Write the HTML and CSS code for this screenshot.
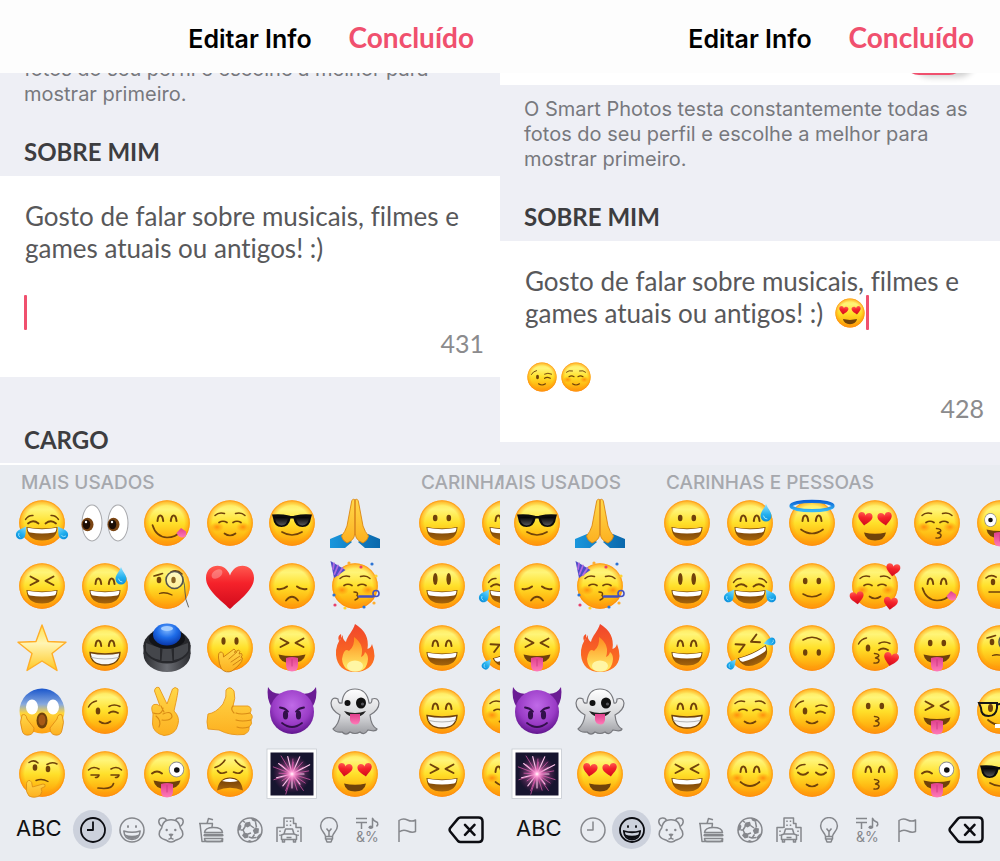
FILE: index.html
```html
<!DOCTYPE html>
<html lang="pt-BR">
<head>
  <meta charset="UTF-8">
  <meta name="viewport" content="width=device-width, initial-scale=1">
  <title>Editar Info</title>
  <link rel="stylesheet" href="styles.css">
</head>
<body>

  <svg class="sprite" aria-hidden="true">
    <defs>
      <linearGradient id="g-face" x1="0" y1="0" x2="0" y2="1">
        <stop offset="0" stop-color="#ffe250"/>
        <stop offset=".2" stop-color="#fff578"/>
        <stop offset=".5" stop-color="#ffe02a"/>
        <stop offset=".75" stop-color="#ffbc14"/>
        <stop offset="1" stop-color="#ff930a"/>
      </linearGradient>
      <radialGradient id="g-edge">
        <stop offset=".76" stop-color="#ff9500" stop-opacity="0"/>
        <stop offset=".92" stop-color="#ff9a10" stop-opacity=".5"/>
        <stop offset="1" stop-color="#ff8408" stop-opacity=".95"/>
      </radialGradient>
      <radialGradient id="g-blush">
        <stop offset="0" stop-color="#ff6a00" stop-opacity=".65"/>
        <stop offset="1" stop-color="#ff7a00" stop-opacity="0"/>
      </radialGradient>
      <linearGradient id="g-mouth" x1="0" y1="0" x2="0" y2="1">
        <stop offset="0" stop-color="#6b3a06"/>
        <stop offset="1" stop-color="#a5640c"/>
      </linearGradient>
      <linearGradient id="g-drop" x1="0" y1="0" x2="0" y2="1">
        <stop offset="0" stop-color="#8fe0ff"/>
        <stop offset=".6" stop-color="#23b0ee"/>
        <stop offset="1" stop-color="#0b8fdc"/>
      </linearGradient>
      <linearGradient id="g-tongue" x1="0" y1="0" x2="0" y2="1">
        <stop offset="0" stop-color="#e0408c"/>
        <stop offset="1" stop-color="#ff7ab8"/>
      </linearGradient>
      <linearGradient id="g-heart" x1="0" y1="0" x2="0" y2="1">
        <stop offset="0" stop-color="#ff5a50"/>
        <stop offset=".4" stop-color="#f5222a"/>
        <stop offset="1" stop-color="#d00a1c"/>
      </linearGradient>
      <linearGradient id="g-hand" x1="0" y1="0" x2="0" y2="1">
        <stop offset="0" stop-color="#ffd84a"/>
        <stop offset="1" stop-color="#fdb020"/>
      </linearGradient>
      <linearGradient id="g-sleeve" x1="0" y1="0" x2="1" y2="0">
        <stop offset="0" stop-color="#1a96dc"/>
        <stop offset="1" stop-color="#0a68ac"/>
      </linearGradient>
      <linearGradient id="g-star" x1="0" y1="0" x2="0" y2="1">
        <stop offset="0" stop-color="#ffe14a"/>
        <stop offset=".4" stop-color="#fff5b4"/>
        <stop offset="1" stop-color="#ffc822"/>
      </linearGradient>
      <linearGradient id="g-scream" x1="0" y1="0" x2="0" y2="1">
        <stop offset="0" stop-color="#1a56cc"/>
        <stop offset=".35" stop-color="#87a9de"/>
        <stop offset=".55" stop-color="#ffd53a"/>
        <stop offset="1" stop-color="#ffa010"/>
      </linearGradient>
      <linearGradient id="g-base" x1="0" y1="0" x2="1" y2="0">
        <stop offset="0" stop-color="#2c2d31"/>
        <stop offset=".5" stop-color="#6b6d73"/>
        <stop offset="1" stop-color="#2c2d31"/>
      </linearGradient>
      <radialGradient id="g-ball" cx=".5" cy=".3" r=".7">
        <stop offset="0" stop-color="#7ab4ff"/>
        <stop offset=".5" stop-color="#1e6ce8"/>
        <stop offset="1" stop-color="#0836a8"/>
      </radialGradient>
      <radialGradient id="g-devil" cx=".5" cy=".35" r=".65">
        <stop offset="0" stop-color="#c06ae8"/>
        <stop offset=".65" stop-color="#9a3cc6"/>
        <stop offset="1" stop-color="#61158e"/>
      </radialGradient>
      <linearGradient id="g-fire" x1="0" y1="0" x2="0" y2="1">
        <stop offset="0" stop-color="#f0452c"/>
        <stop offset="1" stop-color="#ff7a1e"/>
      </linearGradient>
      <linearGradient id="g-flame" x1="0" y1="0" x2="0" y2="1">
        <stop offset="0" stop-color="#ff8a1e"/>
        <stop offset="1" stop-color="#fff26a"/>
      </linearGradient>
      <linearGradient id="g-ghost" x1="0" y1="0" x2="0" y2="1">
        <stop offset="0" stop-color="#ffffff"/>
        <stop offset=".6" stop-color="#d5d6d9"/>
        <stop offset="1" stop-color="#9c9da2"/>
      </linearGradient>
      <radialGradient id="g-burst">
        <stop offset="0" stop-color="#ffffff"/>
        <stop offset=".25" stop-color="#ffa6da"/>
        <stop offset="1" stop-color="#c22a8c" stop-opacity="0"/>
      </radialGradient>
      <linearGradient id="g-halo" x1="0" y1="0" x2="0" y2="1">
        <stop offset="0" stop-color="#0d63d6"/>
        <stop offset="1" stop-color="#35b8f5"/>
      </linearGradient>
      <linearGradient id="g-shades" x1="0" y1="0" x2="0" y2="1">
        <stop offset="0" stop-color="#000"/>
        <stop offset="1" stop-color="#55565a"/>
      </linearGradient>
    </defs>

    <symbol id="icon-recent" viewBox="0 0 26 26">
      <circle cx="13" cy="13" r="12"/>
      <path d="M13 4.500V13H7"/>
    </symbol>
    <symbol id="icon-smileys" viewBox="0 0 26 26">
      <circle cx="13" cy="13" r="12"/>
      <ellipse class="solid" cx="9" cy="9.500" rx="1" ry="1.600"/>
      <ellipse class="solid" cx="17" cy="9.500" rx="1" ry="1.600"/>
      <path d="M4.800 14Q13 16.500 21.200 14Q20.500 22.500 13 22.500T4.800 14Z"/>
      <path class="solid" d="M6 17.500Q13 20 20 17.500Q18 22 13 22T6 17.500Z"/>
    </symbol>
    <symbol id="icon-animals" viewBox="0 0 26 26">
      <path d="M3.800 9.500C-.5 6.500 0 1.400 4 1C6.500 .6 8 2 8.500 3.500M22.200 9.500C26.500 6.500 26 1.400 22 1C19.500 .6 18 2 17.500 3.500"/>
      <path d="M8.500 3.500Q13 2 17.500 3.500Q21.500 5.500 22.300 11Q25 14 24.800 17.500C24.600 22.500 17.500 22.500 16.500 24Q13 26 9.500 24C8.500 22.500 1.400 22.500 1.200 17.500Q1 14 3.700 11Q4.500 5.500 8.500 3.500Z"/>
      <circle class="solid" cx="8.700" cy="13" r="1.200"/>
      <circle class="solid" cx="17.300" cy="13" r="1.200"/>
      <path class="solid" d="M10.500 17Q13 16 15.500 17Q15 19.300 13 19.300T10.500 17Z"/>
      <path d="M13 19V20.800M10.500 21.800Q12 22.300 13 20.800Q14 22.300 15.500 21.800"/>
    </symbol>
    <symbol id="icon-food" viewBox="0 0 26 26">
      <path d="M1 6.500H15M2 6.500L4 24.500H24.500V21.500M14.500 6.500L14 10M9 6.500L10.500 1.500L15 2.800"/>
      <path d="M6.500 15.500Q7 10.500 15.500 10.500T24.500 15.500Z"/>
      <rect class="solid" x="5.500" y="16.800" width="20" height="2.800" rx="1.400"/>
      <path d="M6.500 21.500H24.500Q24.500 24.500 22 24.500H9Q6.500 24.500 6.500 21.500Z"/>
    </symbol>
    <symbol id="icon-activity" viewBox="0 0 26 26">
      <circle cx="13" cy="13" r="12"/>
      <path class="solid" d="M8.500 5.500L13 4.800L14 8.500L10.500 10.500L7.200 8.500ZM18 10.500L22 11.500L21.500 16L17.500 17.200L15.800 13.500ZM7 15.500L11.200 16.500L11.500 20.500L7.800 21.500L5 18.500ZM14 .8Q18 1 20.500 3.500L18.500 5L15 3.500ZM.8 14Q.8 10 2.800 6.800L4.500 9L3.500 13ZM25 16Q23.500 20.500 20.500 22.500L19.500 20.500L22 17.500ZM9.500 24.500L12.500 23L16.500 24.800Q13 25.800 9.500 24.500Z"/>
      <path d="M13.500 8.500L17 11M14 16L11 17M8.500 9L6 13L7.500 16M12 20L15 21L17.500 17.500M18.500 5L19.500 10.500M8 5.500L6 4M3.500 13H6M19.500 20.500L15 21"/>
    </symbol>
    <symbol id="icon-travel" viewBox="0 0 26 26">
      <path d="M1 25V10.500H7.500M8 11V1H17.500V6.500H20V10.500H25V25"/>
      <path d="M11 3.500V5M14.500 3.500V5M11 7.500V9M14.500 7.500V9M4 13.500V15M4 17.500V19M22 13.500V15M22 17.500V19"/>
      <path d="M5.500 22.500V18L8 17L9.500 12H16.500L18 17L20.500 18V22.500ZM8 17H18M6.500 22.500V25H8.500V22.500M17.500 22.500V25H19.500V22.500M10.500 20.500H15.500"/>
    </symbol>
    <symbol id="icon-objects" viewBox="0 0 26 26">
      <path d="M9.500 19.500C9 15.500 4.600 14 4.600 9A8.400 8.400 0 0 1 21.400 9C21.400 14 17 15.500 16.500 19.500ZM9.500 19.500V22H16.500V19.500M10 22.500L11 25H15L16 22.500M10.500 11.500L13 14.500L15.500 11.500M13 14.500V19"/>
    </symbol>
    <symbol id="icon-symbols" viewBox="0 0 26 26">
      <path d="M1 1.500H12M1 5.500H12M6.500 5.500V12M17.500 10V1.200Q18.500 4 22.500 5.500Q23.500 7.500 21.500 9.500"/>
      <ellipse class="solid" cx="15.800" cy="10.200" rx="2.300" ry="1.700"/>
      <text x="1" y="25" class="glyphs">&amp;%</text>
    </symbol>
    <symbol id="icon-flags" viewBox="0 0 26 26">
      <path d="M5 25V3.500Q9 .8 13.500 3T21.500 3V14.500Q18 16 13.500 14T5 15"/>
    </symbol>
    <symbol id="icon-delete" viewBox="0 0 36 28">
      <path d="M12.500 1.500H30.500Q34.500 1.500 34.500 5.500V22Q34.500 26 30.500 26H12.500Q11 26 10 25L2.200 15.500Q1 13.800 2.200 12L10 2.600Q11 1.500 12.500 1.500ZM17 8.800L26.500 18.800M26.500 8.800L17 18.800"/>
    </symbol>
  </svg>

  <main class="screens">

    <section class="screen">
      <header class="topbar">
        <h1>Editar Info</h1>
        <button class="done" type="button">Concluído</button>
      </header>
      <div class="content">
        <p class="note">O Smart Photos testa constantemente todas as fotos do seu perfil e escolhe a melhor para mostrar primeiro.</p>
        <h2 class="label"><label for="bio-before">SOBRE MIM</label></h2>
        <div class="bio">
          <textarea id="bio-before" rows="4" spellcheck="false">Gosto de falar sobre musicais, filmes e
games atuais ou antigos! :)</textarea>
          <span class="caret caret-start"></span>
          <p class="counter">431</p>
        </div>
        <h2 class="label label-next"><label for="job">CARGO</label></h2>
        <input id="job" class="job" type="text">
      </div>
      <div class="keyboard">
        <div class="strip">
          <section class="group recent">
            <h3>MAIS USADOS</h3>
            <div class="emojis" data-list="recent"></div>
          </section>
          <section class="group">
            <h3>CARINHAS E PESSOAS</h3>
            <div class="emojis" data-list="people"></div>
          </section>
        </div>
        <nav class="tabs" data-active="recent"></nav>
      </div>
    </section>

    <section class="screen">
      <header class="topbar">
        <h1>Editar Info</h1>
        <button class="done" type="button">Concluído</button>
      </header>
      <div class="content content-end">
        <div class="photos">
          <button class="add-photo" type="button" aria-label="Adicionar foto"></button>
        </div>
        <p class="note">O Smart Photos testa constantemente todas as fotos do seu perfil e escolhe a melhor para mostrar primeiro.</p>
        <h2 class="label"><label for="bio-after">SOBRE MIM</label></h2>
        <div class="bio">
          <textarea id="bio-after" rows="4" spellcheck="false">Gosto de falar sobre musicais, filmes e
games atuais ou antigos! :)</textarea>
          <span class="typed typed-inline" data-emoji="heartEyes"></span>
          <span class="caret caret-inline"></span>
          <span class="typed typed-last"><span data-emoji="wink"></span><span data-emoji="relaxed"></span></span>
          <p class="counter">428</p>
        </div>
      </div>
      <div class="keyboard">
        <div class="strip strip-scrolled">
          <section class="group recent recent-tail">
            <h3>MAIS USADOS</h3>
            <div class="emojis" data-list="recent" data-skip="20"></div>
          </section>
          <section class="group">
            <h3>CARINHAS E PESSOAS</h3>
            <div class="emojis" data-list="people"></div>
          </section>
        </div>
        <nav class="tabs" data-active="smileys"></nav>
      </div>
    </section>

  </main>

  <script src="script.js"></script>
</body>
</html>
```
FILE: styles.css
```css
* {
  box-sizing: border-box;
}
body {
  margin: 0;
  font-family: Inter, "Liberation Sans", sans-serif;
  background: #eeeff5;
}
h1, h2, h3, p {
  margin: 0;
}
button {
  padding: 0;
  border: none;
  background: none;
  font-family: inherit;
  cursor: pointer;
}
.sprite {
  position: absolute;
  width: 0;
  height: 0;
}
.screens {
  display: flex;
  min-height: 100vh;
}
.screen {
  display: flex;
  flex: 1;
  flex-direction: column;
  min-width: 0;
  height: 100vh;
  overflow: hidden;
}

/* top bar */
.topbar {
  display: grid;
  grid-template-columns: 1fr auto 1fr;
  align-items: center;
  height: 73px;
  flex-shrink: 0;
  padding: 5px 26px 0;
  background: #fdfdfd;
}
.topbar h1 {
  grid-column: 2;
  font-size: 25px;
  font-weight: 600;
  color: #000;
}
.done {
  justify-self: end;
  padding-bottom: 4px;
  font-family: Lato, sans-serif;
  font-size: 28px;
  font-weight: 700;
  color: #f0506e;
}

/* scrolled form, resting at its lower end */
.content {
  display: flex;
  flex: 1;
  flex-direction: column;
  justify-content: flex-end;
  min-height: 0;
  overflow: hidden;
  background: #eeeff5;
}
.content > * {
  flex-shrink: 0;
}
.content-end {
  padding-bottom: 23px;
}
.photos {
  display: flex;
  justify-content: flex-end;
  padding: 0 36px 10px;
  background: #fff;
}
.add-photo {
  width: 60px;
  height: 30px;
  border-radius: 15px;
  background: #f0506e;
  box-shadow: 10px 2px 6px rgba(0, 0, 0, 0.2);
}
.note {
  padding: 12px 24px 0;
  font-size: 20px;
  line-height: 25px;
  color: #77787d;
}
.label {
  padding: 33px 24px 12px;
  font-family: Lato, sans-serif;
  font-size: 24px;
  line-height: 24px;
  font-weight: 700;
  color: #3d3d40;
}
.label-next {
  padding: 51px 24px 11px;
}
.bio {
  position: relative;
  padding: 24px 16px 19px 25px;
  background: #fff;
}
.bio textarea {
  display: block;
  width: 100%;
  height: 128px;
  padding: 0;
  border: none;
  outline: none;
  resize: none;
  overflow: hidden;
  background: none;
  font-family: Lato, sans-serif;
  font-size: 26px;
  line-height: 32px;
  font-variant-ligatures: none;
  color: #58585a;
  caret-color: #f0506e;
}
.counter {
  font-family: Lato, sans-serif;
  font-size: 25px;
  line-height: 30px;
  text-align: right;
  color: #8b8b8d;
}
.caret {
  position: absolute;
  width: 3px;
  height: 35px;
  border-radius: 1px;
  background: #f0506e;
}
.caret-start {
  left: 24px;
  top: 119px;
}
.caret-inline {
  left: 366px;
  top: 54px;
}
.typed {
  position: absolute;
  display: flex;
  gap: 2px;
}
.typed svg {
  display: block;
  width: 32px;
  height: 32px;
}
.typed-inline {
  left: 334px;
  top: 56px;
}
.typed-last {
  left: 26px;
  top: 120px;
}
.job {
  height: 2px;
  padding: 0;
  border: none;
  background: #fff;
}

/* emoji keyboard */
.keyboard {
  flex-shrink: 0;
  padding: 6px 0 7px;
  overflow: hidden;
  background: #e9ecf1;
}
.strip {
  display: flex;
  gap: 25px;
  padding-left: 11px;
}
.strip-scrolled {
  padding-left: 6px;
}
.group {
  width: 375px;
  flex-shrink: 0;
}
.recent-tail {
  width: 125px;
}
.group h3 {
  display: flex;
  padding: 0 10px;
  font-size: 19px;
  line-height: 24px;
  font-weight: 500;
  color: #a6a8ad;
  white-space: nowrap;
}
.recent-tail h3 {
  justify-content: flex-end;
}
.emojis {
  display: grid;
  grid-auto-flow: column;
  grid-template-rows: repeat(5, 1fr);
  grid-auto-columns: 1fr;
  height: 313px;
  margin-top: -3px;
}
.emojis button {
  display: grid;
  place-items: center;
  min-width: 0;
}
.emojis svg {
  width: 50px;
  height: 50px;
  overflow: visible;
}
.tabs {
  display: flex;
  align-items: center;
  height: 49px;
  padding: 0 16px;
}
.abc {
  width: 57px;
  padding-bottom: 3px;
  font-size: 22px;
  text-align: left;
  color: #111;
}
.tab-list {
  display: flex;
  flex: 1;
}
.tab {
  display: flex;
  flex: 1;
  justify-content: center;
  color: #85878c;
}
.tab span {
  display: grid;
  place-items: center;
  width: 39px;
  height: 39px;
  border-radius: 50%;
}
.tab.active {
  color: #0c0d12;
}
.tab.active span {
  background: #ccd1dc;
}
.tabs svg {
  fill: none;
  stroke: currentColor;
  stroke-width: 1.5;
  stroke-linejoin: round;
}
.tab svg {
  width: 26px;
  height: 26px;
}
.tab.active svg {
  stroke-width: 1.8;
}
.solid {
  fill: currentColor;
  stroke: none;
}
.glyphs {
  fill: currentColor;
  stroke: none;
  font-family: Inter, sans-serif;
  font-size: 14px;
}
.delete {
  display: flex;
  justify-content: flex-end;
  width: 57px;
  color: #0c0d12;
}
.delete svg {
  width: 36px;
  height: 28px;
  stroke-width: 2.5;
  stroke-linecap: round;
}
```
FILE: script.js
```javascript
const BROWN = "#70420a";

const line = (d, w = 1.6, color = BROWN) =>
  `<path d="${d}" fill="none" stroke="${color}" stroke-width="${w}" stroke-linecap="round" stroke-linejoin="round"/>`;
const shape = (d, fill, extra = "") => `<path d="${d}" fill="${fill}" ${extra}/>`;
const oval = (x, y, rx, ry, fill = BROWN) =>
  `<ellipse cx="${x}" cy="${y}" rx="${rx}" ry="${ry}" fill="${fill}"/>`;
const at = (x, y, s, body, turn = 0) =>
  `<g transform="translate(${x} ${y}) rotate(${turn}) scale(${s})">${body}</g>`;

// shared pieces, all drawn on a 50 x 50 box
const face = oval(25, 25, 22.8, 22.8, "url(#g-face)") + oval(25, 25, 22.8, 22.8, "url(#g-edge)");
const blush = oval(12, 29, 7, 5, "url(#g-blush)") + oval(38, 29, 7, 5, "url(#g-blush)");
const heart = shape("M0 9C-4 5-10 1-10-4C-10-10-2-11 0-5C2-11 10-10 10-4C10 1 4 5 0 9Z", "url(#g-heart)");
const drop = shape("M0-9C2-4 5.500-1 5.500 3A5.500 5.500 0 0 1-5.500 3C-5.500-1-2-4 0-9Z", "url(#g-drop)") +
  line("M-2.500 3Q-2 6 1 6", 1, "#9be4ff");

const dotEyes = oval(18.2, 20, 2.3, 3.2) + oval(31.8, 20, 2.3, 3.2);
const tallEyes = oval(18.3, 18, 2.3, 6) + oval(31.7, 18, 2.3, 6);
const archEyes = line("M15.500 23Q16 17.500 18.300 17.500T21.200 23M28.800 23Q29.500 17.500 31.700 17.500T34.500 23", 2);
const squeezed = line("M13.500 15.500L21.500 19.800L13.500 24M36.500 15.500L28.500 19.800L36.500 24", 1.9);
const closedEyes = line("M14 24.500Q18 22 22 24.500M28 24.500Q32 22 36 24.500", 1.7);
const brows = line("M10 17.500Q13.500 14 19.500 15.500M30.500 15.500Q36.500 14 40 17.500", 1.5);
const winkEyes = oval(18, 25, 2.3, 3.6) + line("M29 27Q33 24 38 27", 1.8) + line("M8.500 21Q11 16 16.500 15M29 20.500Q34 17.500 40 20.500", 1.5);
const heartEyes = at(15, 21, .72, heart, 8) + at(35, 21, .72, heart, -8);
const laugh = shape("M9.500 29Q25 32 40.500 29Q40 42.500 25 42.500T9.500 29Z", "url(#g-mouth)") +
  shape("M10.500 29.800Q25 32.500 39.500 29.800Q39.500 34 37 34.500Q25 36.500 13 34.500Q10.500 34 10.500 29.800Z", "#fff");
const teeth = shape("M10 29.500Q25 32.500 40 29.500Q39 42 25 42T10 29.500Z", "#f6f6f6", `stroke="${BROWN}" stroke-width="1.4"`) +
  line("M11.500 34.500Q25 37.500 38.500 34.500", .8, "#a3a3a3");
const smallSmile = line("M19.500 35.500Q25 39.500 30.500 35.500", 1.7);
const kiss = line("M24.500 30.500Q30 31 28.500 33.500L25.500 35Q30.500 36 28.500 39Q27.500 40.500 24 40", 1.5);
const tongueMouth = shape("M11.500 31.500Q25 34.500 38.500 31.500Q37 39.500 25 40T11.500 31.500Z", BROWN) +
  shape("M19 35Q25 33 31 35V42Q31 48.500 25 48.500T19 42Z", "url(#g-tongue)") + line("M25 36.500V43", .8, "#c73580");
const handHeld = shape("M9.500 37Q9 31 13 31.500Q15 32 15.500 38L26 35Q29 35 28 37.500L24 39.500Q26 42 23.500 46Q18 50 12 47Q8.500 43 9.500 37Z", "url(#g-hand)", 'stroke="#d98a14" stroke-width=".8"');
const joyParts = line("M8.500 21.500Q11.500 17 16 17.500M34 17.500Q38.500 17 41.500 21.500", 1.4) +
  line("M11 25.500Q16 21 21.500 25.500M28.500 25.500Q34 21 39 25.500", 1.8) + laugh;
const shades = shape("M5 16.500Q14 15.500 22 17.500Q25 18.500 28 17.500Q36 15.500 45 16.500L44 20Q43 29 35.500 29Q28 29 26.500 20.500H23.500Q22 29 14.500 29Q7 29 6 20Z", "#0b0b0c") +
  shape("M8 19.500Q14 18 21 20Q20 27.500 14.500 27.500Q8.500 27 8 19.500ZM42 19.500Q36 18 29 20Q30 27.500 35.500 27.500Q41.500 27 42 19.500Z", "url(#g-shades)");

// rays of uneven length, in two pinks
const burst = Array.from({ length: 26 }, (_, i) => {
  const a = i * Math.PI / 13 + (i % 4) * .06;
  const r = 12 + (i * 7) % 10;
  return line(`M25 25L${(25 + Math.cos(a) * r).toFixed(1)} ${(25 + Math.sin(a) * r).toFixed(1)}`, i % 3 ? .7 : 1.1, i % 3 ? "#e85fb6" : "#ffc4ec");
}).join("");

const emoji = {
  grinning: face + dotEyes + laugh,
  smiley: face + tallEyes + laugh,
  smile: face + archEyes + laugh,
  beaming: face + archEyes + teeth,
  laughing: face + squeezed + laugh,
  sweat: face + archEyes + laugh + at(41, 15, 1, drop),
  joy: face + joyParts + at(5, 34.5, .85, drop, 35) + at(45, 34.5, .85, drop, -35),
  rofl: face + `<g transform="rotate(-25 25 25)">${squeezed + laugh}</g>` + at(7, 41, .7, drop, 40) + at(44.5, 19, .7, drop, -105),
  relaxed: face + blush + brows + closedEyes + smallSmile,
  blushing: face + blush + archEyes + line("M15.500 33Q25 41 34.500 33", 1.7),
  halo: face + archEyes + line("M14 31.500Q25 39.500 36 31.500", 1.7) +
    '<ellipse cx="25" cy="8" rx="21" ry="4.7" fill="none" stroke="url(#g-halo)" stroke-width="3.2"/>',
  slight: face + dotEyes + line("M16 33Q25 38.500 34 33", 1.5),
  upside: face + oval(18.2, 29.5, 2.2, 3.3) + oval(31.8, 29.5, 2.2, 3.3) + line("M16 17Q25 11.500 34 17", 1.5),
  wink: face + winkEyes + smallSmile,
  relieved: face + line("M9.500 19.500Q12 15.500 18 15.500M32 15.500Q38 15.500 40.500 19.500", 1.5) +
    line("M11 23.500Q16 28 21 23.500M29 23.500Q34 28 39 23.500", 1.9) + smallSmile,
  heartEyes: face + heartEyes + shape("M14 34.500Q25 37 36 34.500Q34.500 42.500 25 42.500T14 34.500Z", BROWN),
  smilingHearts: face + blush + brows + closedEyes + smallSmile + at(43, 9, .7, heart, 8) + at(7, 37, .7, heart, -8) + at(40.5, 42.5, .7, heart, 8),
  kissHeart: face + winkEyes + kiss + at(41, 36.5, .75, heart, 12),
  kissing: face + dotEyes + kiss,
  kissSmiling: face + archEyes + kiss,
  kissClosed: face + blush + brows + closedEyes + kiss,
  yum: face + archEyes + line("M10.500 27Q14 39 25 39.500Q34 39.500 38 33.500", 1.7) +
    shape("M34.500 35L39 30L44 33.500Q45 39 41 39.500Q37 40 34.500 35Z", "url(#g-tongue)"),
  tongue: face + dotEyes + tongueMouth,
  tongueSquint: face + squeezed + tongueMouth,
  winkTongue: face + line("M10 24.500Q15 20.500 20 24.500", 2) + tongueMouth + oval(34.5, 20.5, 7.7, 7.9, "#8d8d8f") +
    oval(34.5, 20.5, 6.8, 7, "#fff") + oval(34.8, 21, 2.8, 2.8, "#111"),
  zany: face + oval(15.5, 22, 6.2, 7, "#8d8d8f") + oval(15.5, 22, 5.5, 6.2, "#fff") + oval(15.5, 22, 2.3, 2.3, "#111") + oval(35, 17, 7, 7, "#fff") + oval(35, 17, 2, 2, "#111") + tongueMouth,
  raised: face + line("M11 17Q15 13 21 16M29 12Q35 8 40 13", 1.7) + oval(18, 21, 2.2, 3.2) + oval(32, 20, 2.2, 3.2) + line("M14 31H34", 1.5),
  monocle: face + line("M12 15Q16 14 20.500 12.500M29 11Q35 8 40 13", 1.6) + oval(17, 19, 2.3, 3.2) + line("M17.500 32.500Q23 30.500 30 34", 1.3) +
    '<circle cx="32.5" cy="19" r="8.5" fill="#fff" fill-opacity=".55" stroke="#55554f" stroke-width="1.6"/>' + oval(31.5, 19, 2.2, 3.2, "#8a6420") + line("M41 18Q43 24 43 31T46.500 46", .9, "#55554f"),
  nerd: face + oval(15.5, 22, 2.5, 4) + oval(34.5, 22, 2.5, 4) +
    '<path d="M4 17H22V22Q21 30 13.500 30T6 22ZM28 17H46L44 22Q43 30 36.500 30T28 22ZM22 19Q25 17 28 19" fill="none" stroke="#151515" stroke-width="2"/>' +
    line("M13 34Q25 44 37 34", 1.7) + shape("M20 38H30V42H20Z", "#fff"),
  sunglasses: face + shades + line("M15 34Q25 40 35 34", 1.7),
  disappointed: face + line("M10.500 28Q16 29 20 25.500M30 25.500Q34 29 39.500 28", 2) + line("M19 39.500Q25 32 31 39.500", 1.8),
  scream: oval(25, 25, 22.5, 22.5, "url(#g-scream)") + oval(15, 21, 6, 7.5, "#fff") + oval(36, 21, 6, 7.5, "#fff") +
    oval(25, 34.5, 5.5, 8, BROWN) + oval(25, 34, 3.5, 5.5, "#a75a16") +
    shape("M5 29Q9 27 10 33L17 42Q17 48 12 49Q6 50 5 44Q2 36 5 29ZM45 29Q41 27 40 33L33 42Q33 48 38 49Q44 50 45 44Q48 36 45 29Z", "url(#g-hand)", 'stroke="#dc8610" stroke-width=".8"'),
  thinking: face + line("M12 13.500Q17 10 21 14M30 15.500Q35 12.500 40 15", 1.5) + oval(18, 18.5, 2.3, 3.2) + oval(31, 20, 2.3, 3.2) + line("M19 31.500Q25 29 31 32.500", 1.4) + handHeld,
  smirk: face + line("M8.500 21Q13 16.500 19 20M31 20Q37 16.500 41.500 21", 1.6) + line("M11 26H19Q18.500 28.500 15.500 28.500M31 26H39Q38.500 28.500 35.500 28.500", 1.6) + line("M18 39Q32 41 33.500 34.500", 1.7),
  weary: face + line("M10 18.500Q16 17 20 11M40 18.500Q34 17 30 11", 1.5) + line("M12.500 21.500Q15 26 21.500 23M37.500 21.500Q35 26 28.500 23", 1.6) +
    shape("M12 41.500Q14 28.500 25 28.500T38 41.500Q25 36 12 41.500Z", "url(#g-mouth)") + shape("M17 32Q20 29.500 25 29.500T33 32Q25 34 17 32Z", "#fff"),
  handOver: face + oval(18.5, 18, 2.1, 3.8) + oval(31.5, 18, 2.1, 3.8) +
    shape("M13.500 35Q13 28.500 16.500 29Q19 30 18.500 34L29 26Q31.500 27 29.500 29.500L33.500 27Q36 28 34 31L36.500 30.500Q38 32 36 34.500L37.500 35Q38 38 33 43L27 48Q21 50.500 16.500 46Q14 41 13.500 35Z", "url(#g-hand)", 'stroke="#c8790e" stroke-width=".9"') +
    line("M24 36L32 29M26 39L35 33M28 42L36 36.500", .9, "#c8790e"),
  party: face + blush + brows + closedEyes + line("M24 31Q29 31 27 34.500Q30 37 25 39", 1.5) +
    shape("M.5 0L15.500 9L4 17Z", "#4f4cc8") + line("M4 2.500L3 8M8 4.500L4.500 13M12.500 7L8 14", 1.8, "#b06be0") +
    line("M29 35.500H43", 2.4, "#4550c0") + '<circle cx="46" cy="32.5" r="3" fill="none" stroke="#4550c0" stroke-width="1.6"/>' +
    [[19, 2, "#ffae30"], [31, 6, "#e8406a"], [42, 3, "#2d74d4"], [46, 15, "#ffd232"], [4, 34, "#2d74d4"], [5, 44, "#e8406a"], [15, 47, "#ffd232"], [34, 46, "#2d74d4"], [44, 42, "#ffae30"]]
      .map(([x, y, c]) => oval(x, y, 1.6, 1.6, c)).join(""),
  eyes: [0, 26].map(x => oval(12 + x, 25, 10.5, 18.5, "#a8a9ad") + oval(12 + x, 25, 9.5, 17.5, "#fff") +
    oval(7.5 + x, 26.5, 6, 6.8, "#7a4514") + oval(6.5 + x, 26.5, 3.8, 4.8, "#1c0d05") + oval(6 + x, 24, 1.2, 1.2, "#fff")).join(""),
  pray: shape("M0 41L12 36L22 44L15 50H0ZM50 41L38 36L28 44L35 50H50Z", "url(#g-sleeve)") +
    shape("M24.600 3V36Q24.600 42 17 45Q12 42 11.500 38Q15 34 17 28L21.500 4Q22 .500 24.600 1.500ZM25.400 3V36Q25.400 42 33 45Q38 42 38.500 38Q35 34 33 28L28.500 4Q28 .500 25.400 1.500Z", "url(#g-hand)", 'stroke="#dc8610" stroke-width=".9"'),
  heart: at(25, 26.5, 2.4, heart) + '<ellipse cx="12" cy="13" rx="6" ry="4" fill="#fff" opacity=".28" transform="rotate(-35 12 13)"/>',
  star: shape("M25 2L31 18.500L49 19.300L35 30.500L40 47.500L25 38L10 47.500L15 30.500L1 19.300L19 18.500Z", "url(#g-star)", 'stroke="#ffae28" stroke-width="1.4" stroke-linejoin="round"'),
  trackball: oval(25, 31, 23.5, 18, "url(#g-base)") + shape("M1.500 22H48.500V31H1.500Z", "url(#g-base)") +
    oval(25, 23, 23.5, 17.5, "#27282c") + shape("M4 20L18 25L18 37Q8 35 4 28ZM46 20L32 25L32 37Q42 35 46 28ZM20.500 26H29.500L30.500 38H19.500Z", "#44464b") +
    oval(25, 15.5, 18, 10, "#121317") + oval(25, 11.5, 14, 11, "url(#g-ball)") + oval(25, 5.5, 6, 2.5, "#a4cdff"),
  victory: shape("M11 28Q8 20 12 18.500Q15 17.500 18 20L12.500 5Q13 .500 17 1.500L25 18L30.500 3Q33 0 36 3Q36.500 5 32 25Q38 31 36 38Q34 49 22 49.500Q11 47 10.500 38Z", "url(#g-hand)", 'stroke="#e8961a" stroke-width=".9"') +
    line("M11.500 27Q20 30 21 22M21 28Q30 24 30 31Q28 35 20 34M14 30Q20 35 17 41M19 20L22 26", 1.1, "#d98a14"),
  thumbs: shape("M3 28Q11 27 18 18Q22 11 21 4Q25-1 29 5Q31 12 28 20H43Q48 22 45 27Q49 30 46 34Q48 38 44 41Q45 46 39 48.500Q25 50 14 44L3 43Q1 36 3 28Z", "url(#g-hand)", 'stroke="#e8961a" stroke-width=".9"') +
    line("M31 27Q36 29 45 27M31 34Q37 36 46 34M32 41Q37 43 44 41M28 20Q25 23 29 27", 1.1, "#d98a14"),
  devil: shape("M5 22Q-1 12 1 1Q6 10 18 7ZM45 22Q51 12 49 1Q44 10 32 7Z", "#6b1c94") + oval(25, 26, 22, 22, "url(#g-devil)") +
    oval(18.5, 29, 2.6, 4.5, "#32104a") + oval(31.5, 29, 2.6, 4.5, "#32104a") + line("M13 21.500Q18 22 21 25.500M37 21.500Q32 22 29 25.500", 1.8, "#32104a") + line("M15 37Q25 45 35 37", 1.8, "#32104a"),
  fire: shape("M25 1C23 8 17 13 16 19Q12 16 13 12Q5 22 6 32C7 43 14 49 25 49S44 43 44.500 33Q44 26 42 21Q41 25 37.500 26Q40 10 25 1ZM9 18Q7 13 11 11Q12 15 9 18Z", "url(#g-fire)") +
    shape("M24 14Q25 23 19 28Q14 24 12 36Q13 48 25 48.500T38 36Q38 31 35 29Q34 33 31 34Q35 22 24 14Z", "url(#g-flame)") + oval(25, 43, 8, 5.5, "#fff6a4"),
  ghost: shape("M12 17Q13 3 25 3T39 17Q42 18 42 13Q48 11 49 17Q49 24 40 29Q41 40 47 43Q46 46 38 44Q34 50 30 46Q25 49 20 46Q16 50 12 46Q6 47 3 43Q9 38 10 29Q1 24 1 17Q2 10 8 13Q8 18 12 17Z", "url(#g-ghost)", 'stroke="#77787d" stroke-width="1.2"') +
    oval(17.5, 17, 3, 3, "#111") + oval(31, 17, 5, 5.5, "#111") + oval(32.5, 18, 1.6, 1.6, "#55555a") + shape("M14 25Q25 29 36 25Q32 31 25 31T14 25Z", "#222") +
    shape("M20 28H30V34Q29 39 25 38.500T20 34Z", "url(#g-tongue)"),
  fireworks: '<rect x="0" y="0" width="49.5" height="49.5" fill="#fff" stroke="#c6cad1" stroke-width=".8"/><rect x="3.5" y="3.5" width="43" height="43" fill="#17152f"/>' +
    oval(25, 25, 19, 19, "url(#g-burst)").replace("/>", ' opacity=".6"/>') + burst + oval(25, 25, 9, 9, "url(#g-burst)")
};

// each run of five names fills one column
const lists = {
  recent: [
    "joy", "laughing", "star", "scream", "thinking",
    "eyes", "sweat", "beaming", "wink", "smirk",
    "yum", "monocle", "trackball", "victory", "winkTongue",
    "relaxed", "heart", "handOver", "thumbs", "weary",
    "sunglasses", "disappointed", "tongueSquint", "devil", "fireworks",
    "pray", "party", "fire", "ghost", "heartEyes"
  ],
  people: [
    "grinning", "smiley", "smile", "beaming", "laughing",
    "sweat", "joy", "rofl", "relaxed", "blushing",
    "halo", "slight", "upside", "wink", "relieved",
    "heartEyes", "smilingHearts", "kissHeart", "kissing", "kissSmiling",
    "kissClosed", "yum", "tongue", "tongueSquint", "winkTongue",
    "zany", "raised", "monocle", "nerd", "sunglasses"
  ]
};

const tabs = ["recent", "smileys", "animals", "food", "activity", "travel", "objects", "symbols", "flags"];

const draw = name => `<svg viewBox="0 0 50 50" aria-hidden="true">${emoji[name]}</svg>`;

document.querySelectorAll(".emojis").forEach(box => {
  // skip whole columns that are scrolled out of view
  const names = lists[box.dataset.list].slice(Number(box.dataset.skip || 0));
  box.innerHTML = names.map(name => `<button type="button" aria-label="${name}">${draw(name)}</button>`).join("");
});

document.querySelectorAll("[data-emoji]").forEach(el => {
  el.innerHTML = draw(el.dataset.emoji);
});

document.querySelectorAll(".tabs").forEach(nav => {
  const items = tabs.map(tab => `
    <button class="tab ${tab === nav.dataset.active ? "active" : ""}" type="button" aria-label="${tab}">
      <span><svg><use href="#icon-${tab}"/></svg></span>
    </button>`).join("");
  nav.innerHTML = `
    <button class="abc" type="button">ABC</button>
    <div class="tab-list">${items}</div>
    <button class="delete" type="button" aria-label="Apagar"><svg><use href="#icon-delete"/></svg></button>`;
});
```
